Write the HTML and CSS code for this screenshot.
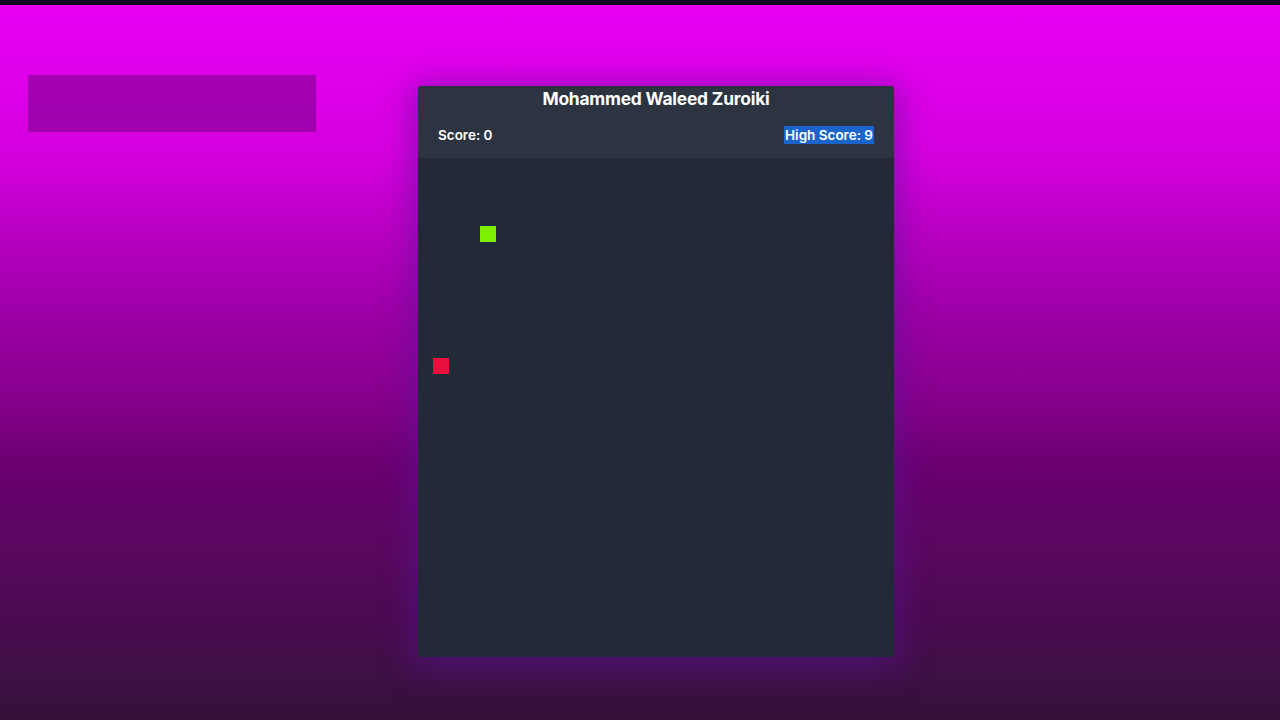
FILE: index.html
```html
<!DOCTYPE html>
<html>
<head>
<meta charset="utf-8">
<link rel="stylesheet" href="styles.css">
</head>
<body>
<div class="topbar"></div>
<div class="stage">
  <div class="sidebox"></div>
  <div class="game">
    <div class="header">
      <h1 class="title">Mohammed Waleed Zuroiki</h1>
      <div class="scores">
        <span class="score">Score: 0</span>
        <span class="high">High Score: 9</span>
      </div>
    </div>
    <div class="board">
      <div class="cell snake" style="left:62px;top:68px"></div>
      <div class="cell food" style="left:15px;top:200px"></div>
    </div>
  </div>
</div>
</body>
</html>
```
FILE: styles.css
```css
html, body {
  margin: 0;
  padding: 0;
  height: 100%;
}
body {
  width: 1280px;
  height: 720px;
  overflow: hidden;
  font-family: "Inter", "Open Sans", sans-serif;
  background: linear-gradient(180deg, #e900f4 0%, #d500df 21%, #a000aa 42%, #84008a 56%, #6a0070 65%, #5a0860 76%, #4a0a50 86%, #3e1045 94%, #341038 100%);
  position: relative;
}
.topbar {
  height: 5px;
  background: #0d0620;
}
.stage {
  position: relative;
  height: 715px;
}
.sidebox {
  position: absolute;
  left: 28px;
  top: 70px;
  width: 288px;
  height: 57px;
  background: rgba(40, 0, 60, 0.32);
}
.game {
  position: absolute;
  left: 418px;
  top: 81px;
  width: 476px;
  height: 571px;
  display: flex;
  flex-direction: column;
  box-shadow: 0 4px 30px 6px rgba(90, 20, 150, 0.55);
  border-radius: 3px 3px 0 0;
  overflow: hidden;
}
.header {
  background: #2d3441;
  height: 72px;
  display: flex;
  flex-direction: column;
  align-items: center;
}
.title {
  margin: 0;
  padding-top: 2px;
  font-size: 17.4px;
  font-weight: 700;
  color: #ffffff;
  line-height: 22px;
  letter-spacing: -0.2px;
}
.scores {
  align-self: stretch;
  display: flex;
  justify-content: space-between;
  align-items: center;
  padding: 0 20px;
  margin-top: 16px;
  font-size: 13.5px;
  font-weight: 600;
  color: #ffffff;
  line-height: 16px;
}
.high {
  background: #1a64cc;
  padding: 1px 1px;
}
.board {
  flex: 1;
  background: #232a37;
  position: relative;
}
.cell {
  position: absolute;
  width: 16px;
  height: 16px;
}
.snake { background: #7cf000; }
.food { background: #e8103c; }
```
